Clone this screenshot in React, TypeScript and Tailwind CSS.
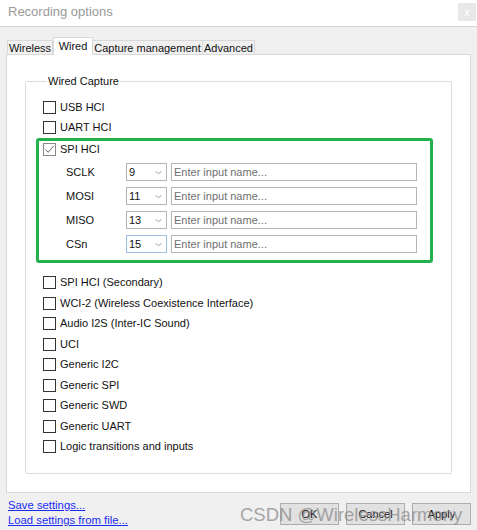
import React from "react";

const font = { fontFamily: '"Liberation Sans", Arial, sans-serif' };

function Box({ checked = false }: { checked?: boolean }) {
  return (
    <div
      className={
        "w-[13px] h-[13px] shrink-0 bg-white border flex items-center justify-center " +
        (checked ? "border-[#8a8a8a]" : "border-[#333333]")
      }
    >
      {checked && (
        <svg width="11" height="11" viewBox="0 0 11 11">
          <polyline points="1.5,5.5 4.2,8.3 9.5,2" fill="none" stroke="#6a6a6a" strokeWidth="1" />
        </svg>
      )}
    </div>
  );
}

function CheckRow({ label, checked = false }: { label: string; checked?: boolean }) {
  return (
    <div className="h-[20.5px] flex items-center gap-[4px] text-[11px] text-[#111]">
      <Box checked={checked} />
      <span className="leading-[13px]">{label}</span>
    </div>
  );
}

function SignalRow({ name, value, focus = false }: { name: string; value: string; focus?: boolean }) {
  return (
    <div className="h-[18px] flex items-center text-[11px] text-[#111]">
      <span className="w-[60px] shrink-0">{name}</span>
      <div
        className={
          "w-[41px] h-[18px] shrink-0 bg-white border flex items-center justify-between pl-[2px] pr-[4px] " +
          (focus ? "border-[#9cc0e6]" : "border-[#b4b4b4]")
        }
      >
        <span>{value}</span>
        <svg width="7" height="5" viewBox="0 0 7 5">
          <polyline points="0.5,1 3.5,4 6.5,1" fill="none" stroke="#a0a0a0" strokeWidth="1" />
        </svg>
      </div>
      <div className="ml-[4px] w-[246px] h-[18px] bg-white border border-[#b4b4b4] flex items-center pl-[2px] text-[#6f6f6f]">
        Enter input name...
      </div>
    </div>
  );
}

export default function App() {
  const lower = [
    "SPI HCI (Secondary)",
    "WCI-2 (Wireless Coexistence Interface)",
    "Audio I2S (Inter-IC Sound)",
    "UCI",
    "Generic I2C",
    "Generic SPI",
    "Generic SWD",
    "Generic UART",
    "Logic transitions and inputs",
  ];
  return (
    <div className="w-[477px] h-[530px] bg-[#f0f0f0] relative overflow-hidden" style={font}>
      {/* Title bar */}
      <div className="h-[27px] bg-white border-b border-[#d4d4d4] flex items-start justify-between pl-[8px] pr-[1px]">
        <span className="text-[13px] text-[#9a9a9a] leading-[24px]">Recording options</span>
        <div className="mt-[3px] w-[18px] h-[18px] bg-[#e8e8e8] text-white text-[10px] flex items-center justify-center">
          x
        </div>
      </div>

      {/* Tabs + panel */}
      <div className="pl-[6px] pt-[10px]">
        <div className="flex items-end h-[17px] pl-[1px] text-[11px] text-[#111]">
          <div className="w-[46px] h-[14px] border border-b-0 border-[#d9d9d9] bg-[#f0f0f0] flex items-center justify-center leading-[12px]">
            Wireless
          </div>
          <div className="w-[40px] h-[18px] -mb-px relative z-10 border border-b-0 border-[#d9d9d9] bg-white flex items-start justify-center pt-[2px] leading-[12px]">
            Wired
          </div>
          <div className="w-[110px] h-[14px] border border-b-0 border-l-0 border-[#d9d9d9] bg-[#f0f0f0] flex items-center justify-center leading-[12px]">
            Capture management
          </div>
          <div className="w-[52px] h-[14px] border border-b-0 border-l-0 border-[#d9d9d9] bg-[#f0f0f0] flex items-center justify-center leading-[12px]">
            Advanced
          </div>
        </div>
        <div className="w-[465px] h-[439px] bg-white border border-[#d9d9d9] pl-[18px] pt-[19px]">
          <fieldset className="w-[427px] h-[400px] border border-[#dcdcdc] rounded-[2px] pl-[17px] pt-[9px]">
            <legend className="ml-[4px] px-[1px] text-[11px] leading-[14px] text-[#111]">Wired Capture</legend>
            <CheckRow label="USB HCI" />
            <CheckRow label="UART HCI" />
            <div className="-ml-[7px] w-[397px] h-[125px] border-[3px] border-[#22b14c] rounded-[3px] pl-[4px] pt-[2px]">
              <div className="h-[13px] flex items-center gap-[4px] text-[11px] text-[#111]">
                <Box checked />
                <span>SPI HCI</span>
              </div>
              <div className="mt-[7px] pl-[23px] flex flex-col gap-[6px]">
                <SignalRow name="SCLK" value="9" />
                <SignalRow name="MOSI" value="11" />
                <SignalRow name="MISO" value="13" />
                <SignalRow name="CSn" value="15" focus />
              </div>
            </div>
            <div className="mt-[9.5px]">
              {lower.map((l) => (
                <CheckRow key={l} label={l} />
              ))}
            </div>
          </fieldset>
        </div>
      </div>

      {/* Bottom */}
      <div className="flex justify-between pr-[6px]">
        <div className="pl-[8px] pt-[5px] flex flex-col text-[11.3px] leading-[15px] text-[#1a2cf0]">
          <span className="underline">Save settings...</span>
          <span className="underline">Load settings from file...</span>
        </div>
        <div className="pt-[10px] flex gap-[7px] text-[11px] text-[#111]">
          {["OK", "Cancel", "Apply"].map((b) => (
            <div
              key={b}
              className="w-[59px] h-[22px] bg-[#e1e1e1] border border-[#adadad] flex items-center justify-center"
            >
              {b}
            </div>
          ))}
        </div>
      </div>

      {/* Watermark */}
      <div className="absolute left-[240px] top-[505px] text-[18.5px] leading-[20px] text-[#8c8c8c] opacity-75 pointer-events-none whitespace-nowrap">
        CSDN @WirelessHarmony
      </div>
    </div>
  );
}
